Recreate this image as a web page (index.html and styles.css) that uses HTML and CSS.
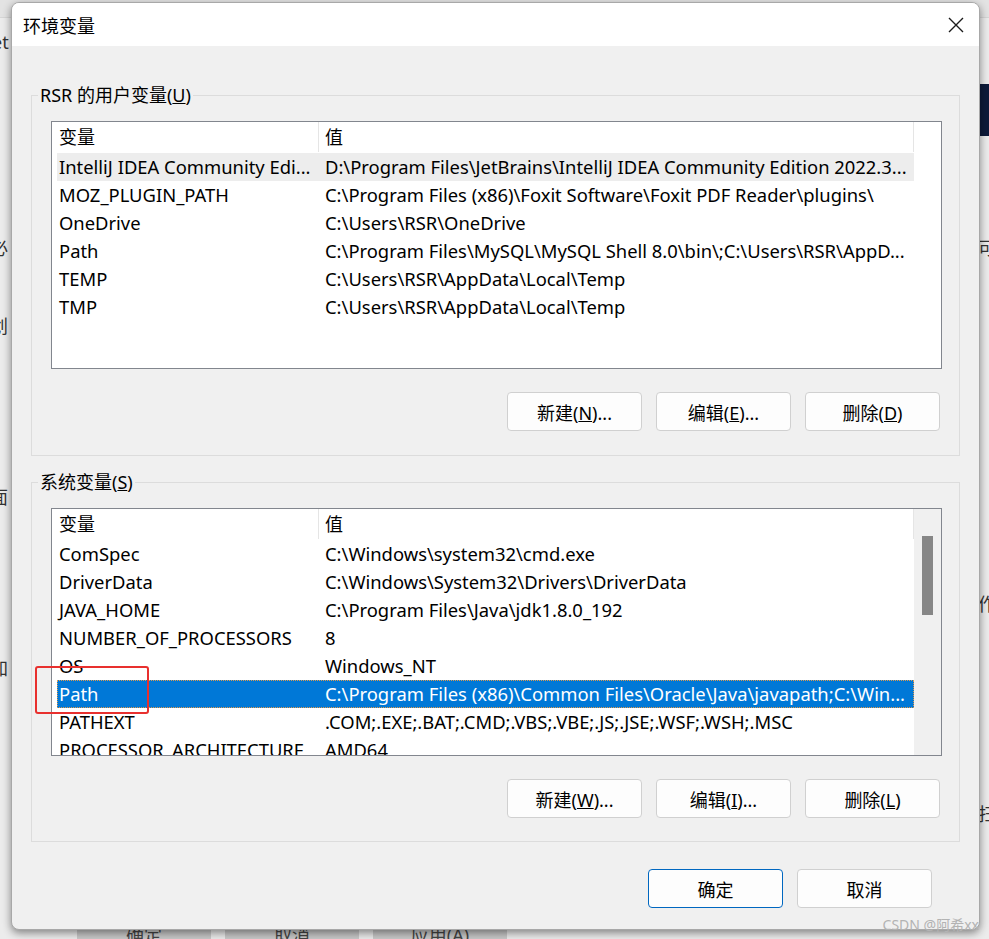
FILE: index.html
```html
<!DOCTYPE html>
<html lang="zh-CN">
<head>
    <meta charset="UTF-8">
    <meta name="viewport" content="width=device-width, initial-scale=1.0">
    <title>环境变量</title>
    <link rel="stylesheet" href="styles.css">
</head>
<body>
    <!-- window behind the dialog -->
    <div class="backdrop">
        <div class="back-top"></div>
        <span class="back-text" style="left:-8px;top:30px">et</span>
        <span class="back-text" style="left:-10px;top:234px">必</span>
        <span class="back-text" style="left:-10px;top:312px">划</span>
        <span class="back-text" style="left:-10px;top:483px">面</span>
        <span class="back-text" style="left:-10px;top:654px">加</span>
        <span class="back-text" style="left:978px;top:234px">可</span>
        <span class="back-text" style="left:978px;top:590px">作</span>
        <span class="back-text" style="left:978px;top:800px">扫</span>
        <div class="back-image"></div>
        <div class="back-buttons">
            <span>确定</span>
            <span>取消</span>
            <span>应用(A)</span>
        </div>
    </div>

    <div class="dialog">
        <div class="titlebar">
            <span class="title">环境变量</span>
            <svg class="close" width="16" height="16" viewBox="0 0 16 16">
                <path d="M1 1 L15 15 M15 1 L1 15" stroke="#1b1b1b" stroke-width="1.4" fill="none"/>
            </svg>
        </div>

        <div class="content">
            <fieldset class="group">
                <legend>RSR 的用户变量(<u>U</u>)</legend>
                <div class="list">
                    <div class="list-body">
                        <div class="list-head">
                            <div class="col-name">变量</div>
                            <div class="col-value">值</div>
                        </div>
                        <div class="rows">
                            <div class="row inactive">
                                <div class="col-name">IntelliJ IDEA Community Edi...</div>
                                <div class="col-value">D:\Program Files\JetBrains\IntelliJ IDEA Community Edition 2022.3...</div>
                            </div>
                            <div class="row">
                                <div class="col-name">MOZ_PLUGIN_PATH</div>
                                <div class="col-value">C:\Program Files (x86)\Foxit Software\Foxit PDF Reader\plugins\</div>
                            </div>
                            <div class="row">
                                <div class="col-name">OneDrive</div>
                                <div class="col-value">C:\Users\RSR\OneDrive</div>
                            </div>
                            <div class="row">
                                <div class="col-name">Path</div>
                                <div class="col-value">C:\Program Files\MySQL\MySQL Shell 8.0\bin\;C:\Users\RSR\AppD...</div>
                            </div>
                            <div class="row">
                                <div class="col-name">TEMP</div>
                                <div class="col-value">C:\Users\RSR\AppData\Local\Temp</div>
                            </div>
                            <div class="row">
                                <div class="col-name">TMP</div>
                                <div class="col-value">C:\Users\RSR\AppData\Local\Temp</div>
                            </div>
                        </div>
                    </div>
                </div>
                <div class="buttons">
                    <button>新建(<u>N</u>)...</button>
                    <button>编辑(<u>E</u>)...</button>
                    <button>删除(<u>D</u>)</button>
                </div>
            </fieldset>

            <fieldset class="group second">
                <legend>系统变量(<u>S</u>)</legend>
                <div class="list">
                    <div class="list-body">
                        <div class="list-head">
                            <div class="col-name">变量</div>
                            <div class="col-value">值</div>
                        </div>
                        <div class="rows">
                            <div class="row">
                                <div class="col-name">ComSpec</div>
                                <div class="col-value">C:\Windows\system32\cmd.exe</div>
                            </div>
                            <div class="row">
                                <div class="col-name">DriverData</div>
                                <div class="col-value">C:\Windows\System32\Drivers\DriverData</div>
                            </div>
                            <div class="row">
                                <div class="col-name">JAVA_HOME</div>
                                <div class="col-value">C:\Program Files\Java\jdk1.8.0_192</div>
                            </div>
                            <div class="row">
                                <div class="col-name">NUMBER_OF_PROCESSORS</div>
                                <div class="col-value">8</div>
                            </div>
                            <div class="row">
                                <div class="col-name">OS</div>
                                <div class="col-value">Windows_NT</div>
                            </div>
                            <div class="row selected">
                                <div class="col-name">Path</div>
                                <div class="col-value">C:\Program Files (x86)\Common Files\Oracle\Java\javapath;C:\Win...</div>
                            </div>
                            <div class="row">
                                <div class="col-name">PATHEXT</div>
                                <div class="col-value">.COM;.EXE;.BAT;.CMD;.VBS;.VBE;.JS;.JSE;.WSF;.WSH;.MSC</div>
                            </div>
                            <div class="row">
                                <div class="col-name">PROCESSOR_ARCHITECTURE</div>
                                <div class="col-value">AMD64</div>
                            </div>
                        </div>
                    </div>
                    <div class="scrollbar">
                        <div class="thumb"></div>
                    </div>
                </div>
                <div class="buttons">
                    <button>新建(<u>W</u>)...</button>
                    <button>编辑(<u>I</u>)...</button>
                    <button>删除(<u>L</u>)</button>
                </div>
            </fieldset>

            <div class="footer">
                <button class="default">确定</button>
                <button>取消</button>
            </div>
        </div>
    </div>

    <div class="mark"></div>
    <div class="watermark">CSDN @阿希xx</div>
</body>
</html>
```

FILE: styles.css
```css
body {
    margin: 0;
    width: 989px;
    height: 939px;
    overflow: hidden;
    position: relative;
    background: #ececec;
    font-family: "Noto Sans", "Noto Sans CJK SC", sans-serif;
    color: #000;
}

/* stuff behind the dialog */
.backdrop {
    position: absolute;
    left: 0;
    top: 0;
    width: 989px;
    height: 939px;
}
.back-top {
    height: 17px;
    background: #e3e3e3;
    border-bottom: 1px solid #d6d6d6;
}
.back-text {
    position: absolute;
    font-size: 18px;
    color: #333;
}
.back-image {
    position: absolute;
    left: 980px;
    top: 84px;
    width: 9px;
    height: 52px;
    background: #0d1a3a;
}
.back-buttons {
    position: absolute;
    left: 77px;
    top: 916px;
    display: flex;
    gap: 14px;
}
.back-buttons span {
    width: 134px;
    height: 38px;
    line-height: 38px;
    text-align: center;
    background: #c9c9c9;
    font-size: 18px;
    color: #444;
}

.dialog {
    position: relative;
    z-index: 1;
    margin: 2px 0 0 11px;
    width: 969px;
    height: 928px;
    box-sizing: border-box;
    background: #f0f0f0;
    border: 1px solid #a8a8a8;
    border-radius: 8px;
    overflow: hidden;
    box-shadow: 0 3px 8px rgba(0, 0, 0, 0.45);
}

.titlebar {
    height: 43px;
    background: #fff;
    display: flex;
    align-items: center;
    justify-content: space-between;
    padding: 0 15px 0 11px;
}
.title {
    font-size: 18px;
}

.content {
    padding: 0 19px;
}

.group {
    margin: 38px 0 0;
    padding: 0 17px 24px 6px;
    border: 1px solid #dcdcdc;
    min-width: 0;
}
.group.second {
    margin-top: 15px;
    padding-bottom: 23px;
}
.group legend {
    padding: 0 2px;
    font-size: 18px;
    line-height: 22px;
}

.list {
    margin: 15px 0 0 13px;
    height: 248px;
    box-sizing: border-box;
    border: 1px solid #82868e;
    background: #fff;
    display: flex;
    overflow: hidden;
}
.list-body {
    width: 862px;
    overflow: hidden;
}
.list-head {
    display: flex;
    height: 30px;
    line-height: 30px;
    font-size: 18px;
    border-right: 1px solid #e5e5e5;
}
.list-head .col-name {
    width: 266px;
    padding-left: 7px;
    box-sizing: border-box;
}
.list-head .col-value {
    flex: 1;
    padding-left: 6px;
    border-left: 1px solid #e5e5e5;
}

.rows {
    margin: 1px 0 0 5px;
}
.row {
    display: flex;
    height: 28px;
    line-height: 28px;
    font-size: 18.4px;
    white-space: nowrap;
}
.row .col-name {
    width: 261px;
    padding-left: 2px;
    box-sizing: border-box;
    overflow: hidden;
}
.row .col-value {
    flex: 1;
    padding-left: 7px;
    overflow: hidden;
}
.row.inactive {
    background: #ededed;
}
.row.selected {
    background: #0078d7;
    color: #fff;
    outline: 1px dotted #e19a4c;
    outline-offset: -1px;
}

.scrollbar {
    width: 27px;
    background: #f0f0f0;
}
.thumb {
    margin: 27px 0 0 8px;
    width: 11px;
    height: 79px;
    background: #868686;
}

.buttons {
    display: flex;
    justify-content: flex-end;
    gap: 14px;
    margin: 23px 2px 0 0;
}
button {
    width: 135px;
    height: 39px;
    padding: 0;
    background: #fdfdfd;
    border: 1px solid #d0d0d0;
    border-radius: 4px;
    font-family: inherit;
    font-size: 18px;
    color: #000;
}
button.default {
    border-color: #0067c0;
}

.footer {
    display: flex;
    justify-content: flex-end;
    gap: 14px;
    margin-top: 27px;
    padding-right: 28px;
}

/* red annotation and watermark drawn on top of the screenshot */
.mark {
    position: absolute;
    z-index: 2;
    left: 35px;
    top: 666px;
    width: 110px;
    height: 44px;
    border: 2px solid #e8302e;
    border-radius: 3px;
}
.watermark {
    position: absolute;
    z-index: 2;
    right: 10px;
    bottom: 5px;
    font-size: 14px;
    color: #b3b3b3;
}
```
